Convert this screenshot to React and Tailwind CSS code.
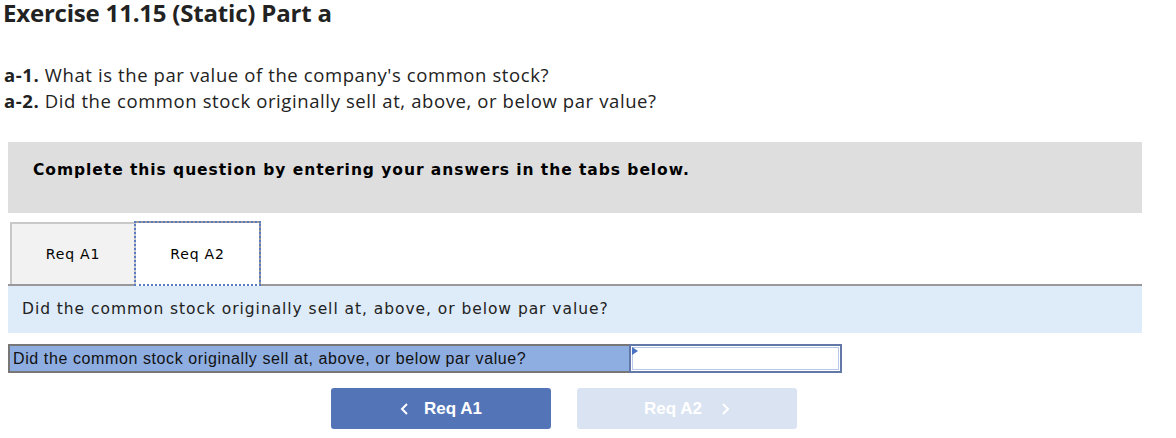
import React from "react";

export default function App() {
  return (
    <div className="w-[1176px] h-[438px] bg-white overflow-hidden relative">
      <h1 className="pl-[3px] pt-[1px] text-[24px] leading-[24px] font-bold text-[#222] tracking-[-0.2px]" style={{ fontFamily: "'Open Sans', Lato, sans-serif" }}>
        Exercise 11.15 (Static) Part a
      </h1>
      <div className="pl-[4px] mt-[37px] text-[18.5px] leading-[26px] tracking-[0.6px] text-[#222]" style={{ fontFamily: "'Open Sans', Lato, sans-serif" }}>
        <p><b>a-1.</b> What is the par value of the company's common stock?</p>
        <p><b>a-2.</b> Did the common stock originally sell at, above, or below par value?</p>
      </div>
      <div className="ml-[8px] w-[1134px] mt-[28px]">
        <div className="h-[71px] bg-[#dedede] pl-[25px] pt-[17px] text-[15.5px] tracking-[0.95px] font-bold text-black" style={{ fontFamily: "'DejaVu Sans', Verdana, sans-serif" }}>
          Complete this question by entering your answers in the tabs below.
        </div>
        <div className="mt-[8px] flex items-end border-b-2 border-[#999] h-[65px]" style={{ fontFamily: "'DejaVu Sans', Verdana, sans-serif" }}>
          <div className="ml-[2px] w-[124px] h-[62px] bg-[#f2f2f2] border-t-2 border-l-2 border-[#c8c8c8] flex items-center justify-center text-[14px] tracking-[0.8px] text-black">
            Req A1
          </div>
          <div className="w-[127px] h-[65px] -mb-[2px] outline-2 outline-dotted outline-[#5b7cc4] -outline-offset-2 bg-white border-t-2 border-r-2 border-[#999] border-l-2 border-l-[#c8c8c8] flex items-center justify-center text-[14px] tracking-[0.8px] text-black">
            Req A2
          </div>
        </div>
        <div className="h-[47px] bg-[#deebf8] pl-[14px] flex items-center text-[15.5px] tracking-[0.95px] text-[#222]" style={{ fontFamily: "'DejaVu Sans', Verdana, sans-serif" }}>
          Did the common stock originally sell at, above, or below par value?
        </div>
        <div className="mt-[11px] flex h-[29px]">
          <div className="w-[621px] bg-[#8eaee2] border-2 border-r-0 border-[#777] pl-[3px] flex items-center text-[16px] tracking-[0.6px] text-[#111]" style={{ fontFamily: "'Liberation Sans', Arial, sans-serif" }}>
            Did the common stock originally sell at, above, or below par value?
          </div>
          <div className="w-[213px] bg-white border-2 border-[#6478a8] relative">
            <div className="absolute inset-[1px] border border-[#b8c8e8]"></div>
            <svg className="absolute left-[1px] top-[1px]" width="7" height="8" viewBox="0 0 7 8">
              <path d="M0 0 L6 4 L0 8 Z" fill="#4a72c4" />
            </svg>
          </div>
        </div>
        <div className="mt-[15px] flex pl-[323px] gap-[26px]" style={{ fontFamily: "'Liberation Sans', Arial, sans-serif" }}>
          <button className="w-[220px] h-[41px] rounded-[3px] bg-[#5375b8] text-white font-bold text-[17px] flex items-center justify-center gap-[14px]">
            <svg width="10" height="14" viewBox="0 0 10 14"><path d="M7 2 L2 7 L7 12" stroke="white" strokeWidth="2" fill="none" /></svg>
            <span>Req A1</span>
          </button>
          <button className="w-[220px] h-[41px] rounded-[3px] bg-[#dae3f1] text-white font-bold text-[17px] flex items-center justify-center gap-[18px]">
            <span>Req A2</span>
            <svg width="10" height="14" viewBox="0 0 10 14"><path d="M3 2 L8 7 L3 12" stroke="white" strokeWidth="2" fill="none" /></svg>
          </button>
        </div>
      </div>
    </div>
  );
}
